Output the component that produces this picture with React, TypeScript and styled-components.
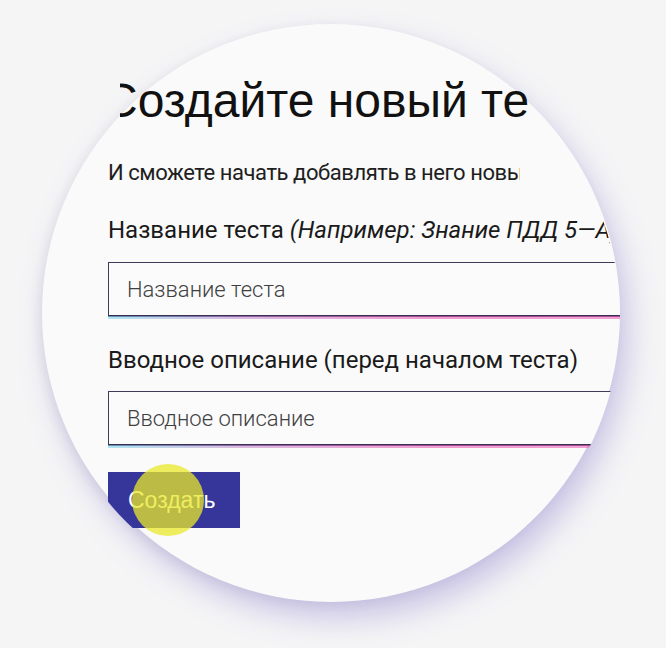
import styled, { createGlobalStyle } from "styled-components"

const GlobalStyle = createGlobalStyle`
  html, body {
    margin: 0;
    padding: 0;
    background: #f5f5f6;
  }
  #root {
    width: 666px;
    height: 648px;
    overflow: hidden;
  }
`

const App = () => {
  return (
    <Page>
      <GlobalStyle />
      <Disk>
        <Content>
          <HeadingClip>
            <Heading>Создайте новый тест</Heading>
          </HeadingClip>
          <SubClip>
            <Sub>И сможете начать добавлять в него новые вопросы</Sub>
          </SubClip>
          <Fields>
            <Label top="0">
              Название теста <em>(Например: Знание ПДД 5—А)</em>
            </Label>
            <Field top="17px">
              <Input placeholder="Название теста" />
            </Field>
            <Label top="28px">Вводное описание (перед началом теста)</Label>
            <Field top="16px">
              <Input placeholder="Вводное описание" />
            </Field>
            <ButtonWrap>
              <Button>Создать</Button>
              <Click />
            </ButtonWrap>
          </Fields>
        </Content>
      </Disk>
    </Page>
  )
}

export default App

const Page = styled.div`
  width: 666px;
  height: 648px;
  display: flex;
  justify-content: center;
  padding-top: 24px;
  box-sizing: border-box;
  font-family: Roboto, "Liberation Sans", sans-serif;
`

const Disk = styled.div`
  width: 578px;
  height: 578px;
  margin-left: -4px;
  border-radius: 50%;
  background: #fafafa;
  box-shadow: 8px 16px 30px rgba(118, 100, 196, 0.34),
    -3px 3px 12px rgba(0, 0, 0, 0.06);
`

const Content = styled.div`
  display: flex;
  flex-direction: column;
  padding: 51px 0 0 66px;
`

const HeadingClip = styled.div`
  width: 411px;
  margin-left: 12px;
  overflow: hidden;
`

const Heading = styled.h1`
  margin: 0 0 0 -17px;
  font-family: "Liberation Sans", Arial, sans-serif;
  font-size: 48px;
  line-height: 52px;
  font-weight: 400;
  color: #111;
  white-space: nowrap;
`

const SubClip = styled.div`
  width: 412px;
  margin-top: 31px;
  overflow: hidden;
`

const Sub = styled.p`
  margin: 0;
  font-size: 22px;
  line-height: 30px;
  letter-spacing: -0.45px;
  color: #1e1e1e;
  white-space: nowrap;
`

const Fields = styled.div`
  display: flex;
  flex-direction: column;
  margin-top: 27px;
  width: 560px;
  clip-path: circle(289px at 223px 103px);
`

const Label = styled.div<{ top: string }>`
  margin-top: ${(p) => p.top};
  font-size: 24px;
  line-height: 30px;
  color: #1a1a1a;
  white-space: nowrap;

  em {
    font-style: italic;
  }
`

const Field = styled.div<{ top: string }>`
  position: relative;
  margin-top: ${(p) => p.top};
  height: 55px;

  &::after {
    content: "";
    position: absolute;
    left: 0;
    right: 0;
    bottom: -2px;
    height: 3px;
    background: linear-gradient(90deg, #7fd6ea 0%, #c98bd0 25%, #ec5fb4 60%, #e86ab8 100%);
    opacity: 0.6;
    filter: blur(0.6px);
  }
`

const Input = styled.input`
  width: 100%;
  height: 100%;
  box-sizing: border-box;
  border: 1.5px solid #3c3c58;
  border-bottom: 2px solid #3a2f55;
  background: #fbfbfb;
  padding: 0 18px;
  font-family: Roboto, "Liberation Sans", sans-serif;
  font-size: 22px;
  font-weight: 300;
  color: #222;
  outline: none;

  &::placeholder {
    color: #404040;
  }
`

const ButtonWrap = styled.div`
  position: relative;
  margin-top: 26px;
  width: 132px;
  height: 56px;
`

const Button = styled.button`
  width: 100%;
  height: 100%;
  border: none;
  background: #36359a;
  color: #fff;
  font-family: "Liberation Sans", Arial, sans-serif;
  font-size: 23px;
  text-align: left;
  padding: 0 0 0 20px;
  cursor: pointer;
`

const Click = styled.div`
  position: absolute;
  left: 24px;
  top: -8px;
  width: 72px;
  height: 72px;
  border-radius: 50%;
  background: rgba(232, 232, 40, 0.75);
  pointer-events: none;
`
